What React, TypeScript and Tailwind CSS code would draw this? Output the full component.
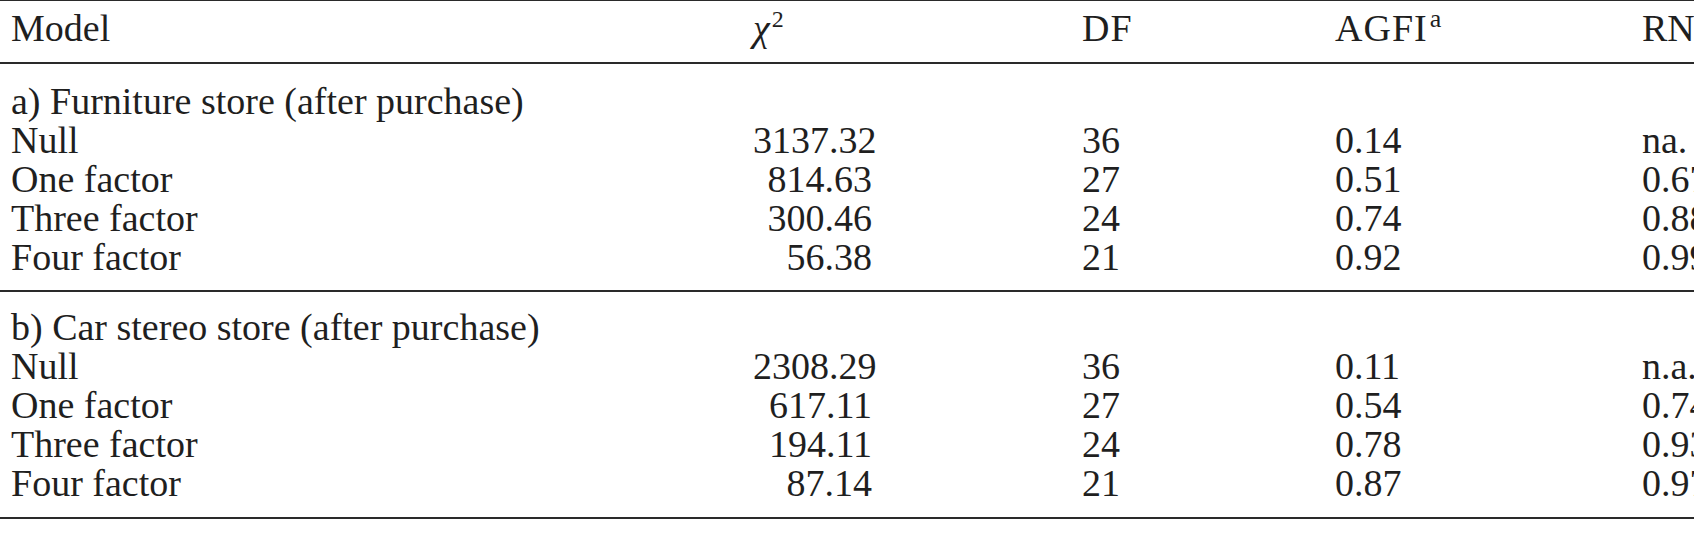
const sections = [
  {
    title: 'a) Furniture store (after purchase)',
    rows: [
      ['Null', '3137.32', '36', '0.14', 'na.'],
      ['One factor', '814.63', '27', '0.51', '0.67'],
      ['Three factor', '300.46', '24', '0.74', '0.88'],
      ['Four factor', '56.38', '21', '0.92', '0.99'],
    ],
  },
  {
    title: 'b) Car stereo store (after purchase)',
    rows: [
      ['Null', '2308.29', '36', '0.11', 'n.a.'],
      ['One factor', '617.11', '27', '0.54', '0.74'],
      ['Three factor', '194.11', '24', '0.78', '0.93'],
      ['Four factor', '87.14', '21', '0.87', '0.97'],
    ],
  },
];

const cols = 'grid grid-cols-[742px_119px_463px_307px_1fr]';

export default function App() {
  return (
    <div
      className="w-[1694px] h-[535px] overflow-hidden bg-white text-[#1f1f1f] text-[38px] leading-[39px] whitespace-nowrap"
      style={{ fontFamily: '"Liberation Serif", "Times New Roman", serif' }}
    >
      <div className="border-t border-[#2a2a2a]" />
      {/* Header */}
      <div className={`${cols} pl-[11px] pt-[8px] pb-[14px] border-b-2 border-[#2a2a2a]`}>
        <div>Model</div>
        <div className="italic">
          χ<sup className="text-[24px] not-italic relative -top-[14px] left-[2px]">2</sup>
        </div>
        <div className="pl-[210px] tracking-[1px]">DF</div>
        <div className="tracking-[1px]">
          AGFI<sup className="text-[26px] tracking-normal relative -top-[14px] left-[2px]">a</sup>
        </div>
        <div>RN</div>
      </div>

      {sections.map((s, i) => (
        <div
          key={s.title}
          className={`pl-[11px] ${i === 0 ? 'pt-[18px] pb-[13px]' : 'pt-[16px] pb-[14px]'} border-b-2 border-[#2a2a2a]`}
        >
          <div>{s.title}</div>
          {s.rows.map((r) => (
            <div key={r[0]} className={cols}>
              <div>{r[0]}</div>
              <div className="text-right">{r[1]}</div>
              <div className="pl-[210px]">{r[2]}</div>
              <div>{r[3]}</div>
              <div>{r[4]}</div>
            </div>
          ))}
        </div>
      ))}
    </div>
  );
}
